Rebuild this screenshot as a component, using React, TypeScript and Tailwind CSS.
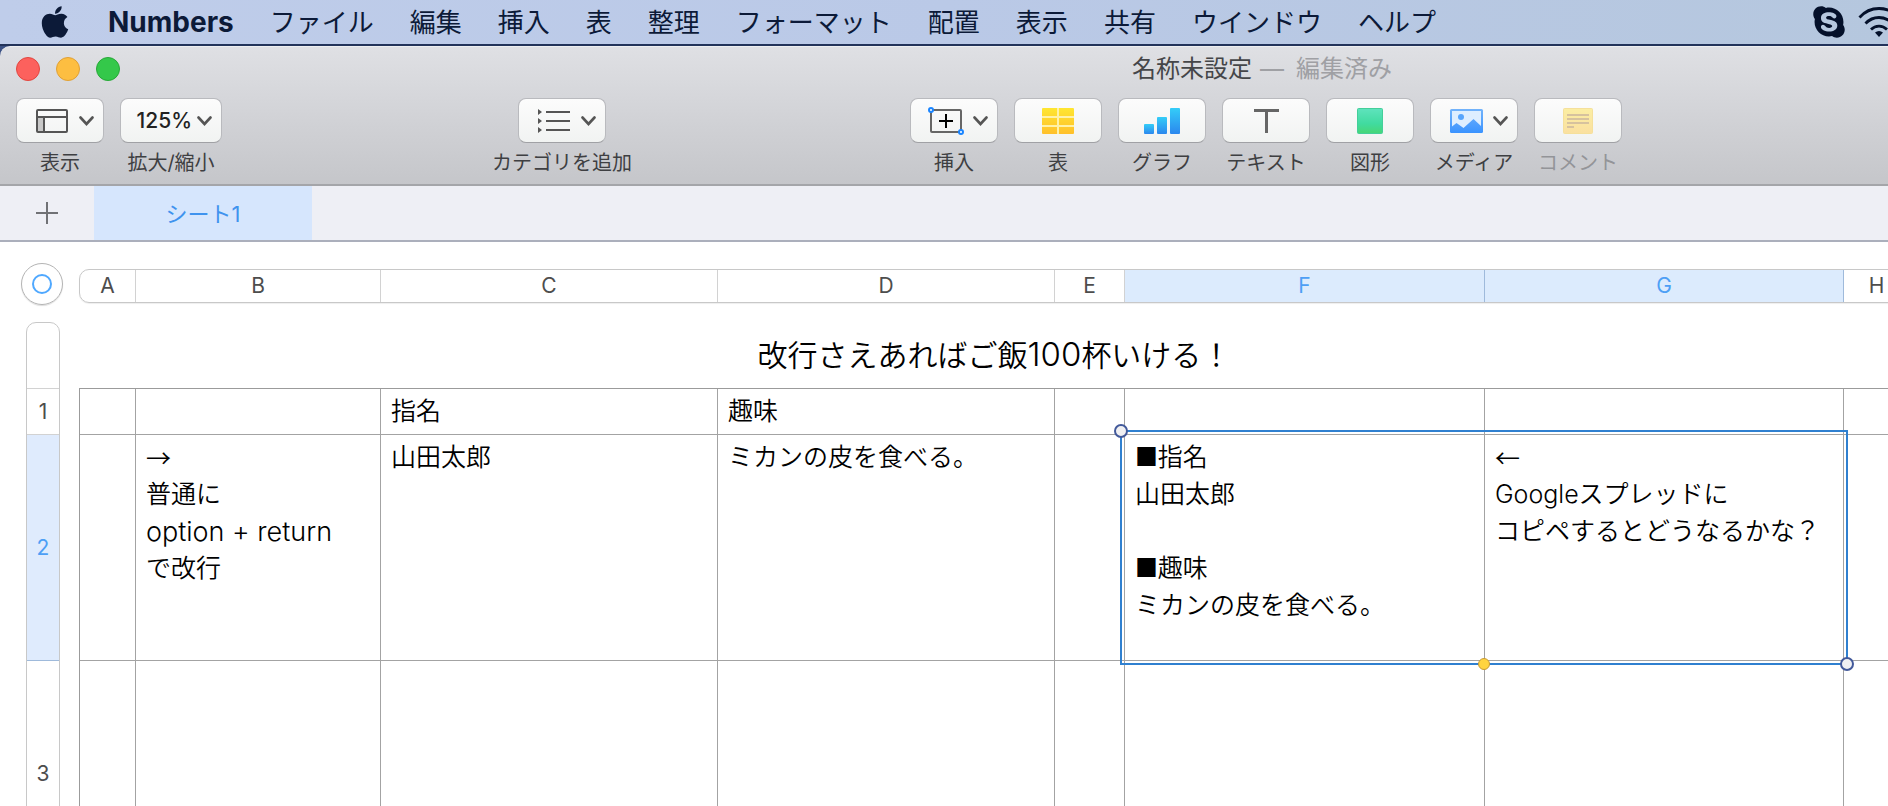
import clsx from 'clsx';
import type { ReactNode } from 'react';
import { FaApple, FaSkype } from 'react-icons/fa';

const MENUS = ['ファイル', '編集', '挿入', '表', '整理', 'フォーマット', '配置', '表示', '共有', 'ウインドウ', 'ヘルプ'];

const COLUMNS = [
    { name: 'A', width: 'w-[56px]' },
    { name: 'B', width: 'w-[245px]' },
    { name: 'C', width: 'w-[337px]' },
    { name: 'D', width: 'w-[337px]' },
    { name: 'E', width: 'w-[70px]' },
    { name: 'F', width: 'w-[360px]', selected: true },
    { name: 'G', width: 'w-[359px]', selected: true },
    { name: 'H', width: 'w-[66px]' },
];

const ROWS = [
    { name: '1', height: 'h-[46px]', cells: ['', '', '指名', '趣味', '', '', '', ''] },
    {
        name: '2',
        height: 'h-[226px]',
        selected: true,
        cells: [
            '',
            '→\n普通に\noption + return\nで改行',
            '山田太郎',
            'ミカンの皮を食べる。',
            '',
            '■指名\n山田太郎\n\n■趣味\nミカンの皮を食べる。',
            '←\nGoogleスプレッドに\nコピペするとどうなるかな？',
            '',
        ],
    },
    { name: '3', height: 'h-[227px]', cells: ['', '', '', '', '', '', '', ''] },
];

function Icon({ children }: { children: ReactNode }) {
    return (
        <svg width="36" height="28" viewBox="0 0 36 28" fill="none" aria-hidden="true">
            {children}
        </svg>
    );
}

function Chevron() {
    return (
        <svg width="15" height="10" viewBox="0 0 15 10" fill="none" aria-hidden="true">
            <path d="M1.5 1.5 7.5 8l6-6.5" stroke="#555" strokeWidth="2.6" strokeLinecap="round" />
        </svg>
    );
}

function ViewIcon() {
    return (
        <Icon>
            <path d="M3 11h7v14H3z" fill="#c8c8c8" />
            <rect x="3" y="3" width="30" height="22" rx="1" stroke="#555" strokeWidth="2" />
            <path d="M3 10h30M10 10v15" stroke="#555" strokeWidth="2" />
        </Icon>
    );
}

function CategoryIcon() {
    return (
        <Icon>
            <path d="M2 2v6l4-3zM2 11v6l4-3zM2 20v6l4-3z" fill="#555" />
            <path d="M10 5h24M10 14h24M10 23h24" stroke="#555" strokeWidth="2" />
        </Icon>
    );
}

function InsertIcon() {
    return (
        <Icon>
            <rect x="3" y="3" width="30" height="22" rx="1" stroke="#666" strokeWidth="2" />
            <path d="M18 7v14M11 14h14" stroke="#000" strokeWidth="2" />
            <circle cx="3" cy="3" r="2" fill="#fff" stroke="#1a85ff" strokeWidth="2" />
            <circle cx="33" cy="25" r="2" fill="#fff" stroke="#1a85ff" strokeWidth="2" />
        </Icon>
    );
}

function TableIcon() {
    return (
        <Icon>
            <defs>
                <linearGradient id="table" x1="0" y1="0" x2="0" y2="1">
                    <stop stopColor="#ffe631" />
                    <stop offset="1" stopColor="#ffc02b" />
                </linearGradient>
            </defs>
            <rect x="2" y="1" width="32" height="26" rx="1" fill="url(#table)" />
            <path d="M18 1v26M2 10h32M2 19h32" stroke="#fff2a8" strokeWidth="2" />
        </Icon>
    );
}

function ChartIcon() {
    return (
        <Icon>
            <defs>
                <linearGradient id="chart" x1="0" y1="0" x2="0" y2="1">
                    <stop stopColor="#34cdf8" />
                    <stop offset="1" stopColor="#2b87ee" />
                </linearGradient>
            </defs>
            <rect x="0" y="17" width="10" height="10" rx="1" fill="url(#chart)" />
            <rect x="13" y="10" width="10" height="17" rx="1" fill="url(#chart)" />
            <rect x="26" y="1" width="10" height="26" rx="1" fill="url(#chart)" />
        </Icon>
    );
}

function TextIcon() {
    return (
        <Icon>
            <path d="M6 3.5h25M18.5 3.5V26" stroke="#666" strokeWidth="3" />
        </Icon>
    );
}

function ShapeIcon() {
    return (
        <Icon>
            <defs>
                <linearGradient id="shape" x1="0" y1="0" x2="0" y2="1">
                    <stop stopColor="#5fe3bd" />
                    <stop offset="0.6" stopColor="#41dba0" />
                    <stop offset="1" stopColor="#47d676" />
                </linearGradient>
            </defs>
            <rect x="5.5" y="1.5" width="25" height="25" rx="1" fill="url(#shape)" stroke="#44cf9a" />
        </Icon>
    );
}

function MediaIcon() {
    return (
        <Icon>
            <defs>
                <linearGradient id="media" x1="0" y1="0" x2="0" y2="1">
                    <stop stopColor="#72b3fb" />
                    <stop offset="1" stopColor="#3a93ff" />
                </linearGradient>
            </defs>
            <rect x="2" y="2" width="33" height="24" rx="1.5" fill="url(#media)" />
            <path d="M4 4h29v15l-7.5-7L15.5 21l-7-5L4 19.5z" fill="#deeeff" />
            <circle cx="13" cy="10" r="3" fill="#58a5fc" />
        </Icon>
    );
}

function CommentIcon() {
    return (
        <Icon>
            <defs>
                <linearGradient id="comment" x1="0" y1="0" x2="0" y2="1">
                    <stop stopColor="#fbeea3" />
                    <stop offset="1" stopColor="#fae0a0" />
                </linearGradient>
            </defs>
            <rect x="3.5" y="1.5" width="29" height="25" rx="1" fill="url(#comment)" stroke="#f5e09b" />
            <path d="M7 8h22M7 12h22M7 16h22M7 20h7" stroke="#d6c29e" strokeWidth="2" />
        </Icon>
    );
}

function WifiIcon() {
    return (
        <svg width="42" height="32" viewBox="0 0 42 32" fill="none" aria-hidden="true" className="shrink-0">
            <path
                d="M1.5 11.5C12-.5 30-.5 40.5 11.5M7.5 17.5c7.5-8 19.5-8 27 0M13 23.5c4.5-4.5 11.5-4.5 16 0"
                stroke="#04102a"
                strokeWidth="2.8"
            />
            <path d="M21 31l-4-4.5c2.5-2 5.5-2 8 0z" fill="#04102a" />
        </svg>
    );
}

interface ToolProps {
    label: string;
    icon: ReactNode;
    menu?: boolean;
    wide?: boolean;
    disabled?: boolean;
}

function Tool({ label, icon, menu, wide, disabled }: ToolProps) {
    return (
        <div className="flex shrink-0 flex-col items-center gap-2">
            <button
                aria-label={label}
                disabled={disabled}
                className={clsx(
                    'flex h-[45px] items-center rounded-lg border border-[#b9babe] border-b-[#a0a1a5] bg-linear-to-b from-[#fcfcfc] to-[#f1f3f2]',
                    wide ? 'w-[102px]' : 'w-[88px]',
                    menu ? 'justify-end pr-[9px]' : 'justify-center',
                    menu && (wide ? 'gap-[5px]' : 'gap-[9px]')
                )}
            >
                {icon}
                {menu && <Chevron />}
            </button>
            <span className={clsx('text-[20px] leading-6', disabled ? 'text-[#939498]' : 'text-[#3e3f42]')}>{label}</span>
        </div>
    );
}

// Frame drawn over the selected range, anchored to its top left cell
function Selection() {
    return (
        <div className="pointer-events-none absolute -top-[5px] -left-[5px] z-10 h-[235px] w-[728px] border-2 border-[#2f80d0]">
            <span className="absolute -top-2 -left-2 size-[14px] rounded-full border-2 border-[#42599a] bg-[#f0f0f2]" />
            <span className="absolute -right-2 -bottom-2 size-[14px] rounded-full border-2 border-[#42599a] bg-[#f0f0f2]" />
            <span className="absolute -bottom-[7px] left-1/2 size-3 -translate-x-1/2 rounded-full border border-[#c79a35] bg-[#ffd43f]" />
        </div>
    );
}

function MenuBar() {
    return (
        <nav className="flex h-[46px] items-center border-b-2 border-[#22335a] bg-linear-to-r from-[#bfcdea] via-[#bac9e7] to-[#b5c7de] pl-10 text-[26px] text-[#0c1a38]">
            <FaApple className="h-9 w-[30px] shrink-0" />
            <button className="mr-9 ml-[38px] text-[28px] font-bold">Numbers</button>
            <div className="flex shrink-0 gap-9">
                {MENUS.map((menu) => (
                    <button key={menu} className="whitespace-nowrap">
                        {menu}
                    </button>
                ))}
            </div>
            <div className="-mr-3 ml-auto flex shrink-0 items-center gap-[13px] text-[#04102a]">
                <FaSkype className="h-9 w-8" />
                <WifiIcon />
            </div>
        </nav>
    );
}

function Toolbar() {
    return (
        <header className="rounded-tl-[10px] border-t border-b-2 border-t-[#eeeff1] border-b-[#a4a5a9] bg-linear-to-b from-[#dfe0e4] to-[#c5c6ca]">
            <div className="flex h-[43px] items-center">
                <div className="flex w-[1132px] shrink-0 gap-4 pl-4">
                    <button aria-label="閉じる" className="size-6 rounded-full border border-[#e2463f] bg-[#fc615d]" />
                    <button aria-label="しまう" className="size-6 rounded-full border border-[#e0a035] bg-[#fdbe41]" />
                    <button aria-label="フルスクリーン" className="size-6 rounded-full border border-[#27a837] bg-[#34c84a]" />
                </div>
                <h1 className="flex gap-2 text-[24px] whitespace-nowrap text-[#454649]">
                    名称未設定
                    <span className="flex gap-3 text-[#9fa0a4]">
                        <span>—</span>
                        <span>編集済み</span>
                    </span>
                </h1>
            </div>
            <div className="flex h-[94px] items-start gap-4 pt-2 pl-4">
                <Tool label="表示" icon={<ViewIcon />} menu />
                <Tool
                    label="拡大/縮小"
                    icon={<span className="text-[21px] font-medium text-[#222]">125%</span>}
                    menu
                    wide
                />
                <div className="mr-[262px] ml-[254px]">
                    <Tool label="カテゴリを追加" icon={<CategoryIcon />} menu />
                </div>
                <Tool label="挿入" icon={<InsertIcon />} menu />
                <Tool label="表" icon={<TableIcon />} />
                <Tool label="グラフ" icon={<ChartIcon />} />
                <Tool label="テキスト" icon={<TextIcon />} />
                <Tool label="図形" icon={<ShapeIcon />} />
                <Tool label="メディア" icon={<MediaIcon />} menu />
                <Tool label="コメント" icon={<CommentIcon />} disabled />
            </div>
        </header>
    );
}

function SheetTabs() {
    return (
        <div className="flex h-14 border-b-2 border-[#abafbc] bg-[#eeeff5]">
            <button aria-label="シートを追加" className="flex w-[94px] items-center justify-center">
                <svg width="22" height="22" viewBox="0 0 22 22" aria-hidden="true">
                    <path d="M11 0v22M0 11h22" stroke="#707175" strokeWidth="2" />
                </svg>
            </button>
            <button className="w-[218px] bg-[#d6e6fd] pt-0.5 text-[22px] text-[#3f93ee]">シート1</button>
        </div>
    );
}

function ColumnHeader() {
    return (
        <div className="flex h-[34px] w-max rounded-l-[10px] border border-[#c8c8c8] shadow-[0_1px_1px_#eee]">
            {COLUMNS.map((col) => (
                <button
                    key={col.name}
                    className={clsx(
                        'border-r text-[21px] leading-8',
                        col.width,
                        col.selected
                            ? 'border-[#9fbadb] bg-[#dcebfd] text-[#4d9ff5]'
                            : 'border-[#d2d2d2] text-[#4d4d4d]'
                    )}
                >
                    {col.name}
                </button>
            ))}
        </div>
    );
}

function RowHeader() {
    return (
        <div className="mt-[19px] ml-[26px] flex w-[34px] flex-col rounded-t-[10px] border border-[#c8c8c8]">
            <div className="h-[66px] border-b border-[#d2d2d2]" />
            {ROWS.map((row) => (
                <button
                    key={row.name}
                    className={clsx(
                        'border-b text-[21px]',
                        row.height,
                        row.selected
                            ? 'border-[#9fbadb] bg-[#dfebfd] text-[#4d9ff5]'
                            : 'border-[#d2d2d2] text-[#4d4d4d]'
                    )}
                >
                    {row.name}
                </button>
            ))}
        </div>
    );
}

// Arrows take the full-width glyph, all-Latin lines are set a little larger
function CellText({ text }: { text: string }) {
    return text.split('\n').map((line, i) => (
        <div
            key={i}
            className={clsx(
                'h-[37px]',
                /^[→←]$/.test(line) && "font-['Noto_Sans_CJK_JP',sans-serif]",
                /^[a-z+ ]+$/.test(line) ? 'text-[27px]' : 'text-[25px]'
            )}
        >
            {line}
        </div>
    ));
}

function SheetTable() {
    return (
        <table className="w-[1831px] table-fixed border-separate border-spacing-0 border-t border-l border-[#9b9b9b] font-[350] text-black">
            <caption className="h-[85px] pt-[29px] text-[30px] leading-[44px]">
                改行さえあればご飯<span className="text-[33px]">100</span>杯いける！
            </caption>
            <colgroup>
                {COLUMNS.map((col) => (
                    <col key={col.name} className={col.width} />
                ))}
            </colgroup>
            <tbody>
                {ROWS.map((row) => (
                    <tr key={row.name} className={row.height}>
                        {row.cells.map((text, i) => (
                            <td
                                key={COLUMNS[i].name}
                                className="relative border-r border-b border-[#a3a3a3] pt-1 pr-0 pb-0 pl-[10px] align-top leading-[37px] whitespace-pre"
                            >
                                <CellText text={text} />
                                {row.name === '2' && COLUMNS[i].name === 'F' && <Selection />}
                            </td>
                        ))}
                    </tr>
                ))}
            </tbody>
        </table>
    );
}

export default function App() {
    return (
        <div
            lang="ja"
            className="flex h-screen flex-col overflow-hidden bg-white font-['Inter','Noto_Sans_CJK_JP',sans-serif]"
        >
            <MenuBar />
            <div className="bg-[#3b5184]">
                <Toolbar />
            </div>
            <SheetTabs />
            <main className="grid flex-1 grid-cols-[79px_1fr] grid-rows-[61px_1fr] overflow-hidden">
                <div className="pt-[21px] pl-[21px]">
                    <button
                        aria-label="表を選択"
                        className="flex size-[42px] items-center justify-center rounded-full border border-[#b4b4b4] shadow-[0_1px_1px_#ddd]"
                    >
                        <span className="size-5 rounded-full border-2 border-[#4fa8ff]" />
                    </button>
                </div>
                <div className="min-w-0 pt-[27px]">
                    <ColumnHeader />
                </div>
                <RowHeader />
                <div className="min-w-0">
                    <SheetTable />
                </div>
            </main>
        </div>
    );
}
